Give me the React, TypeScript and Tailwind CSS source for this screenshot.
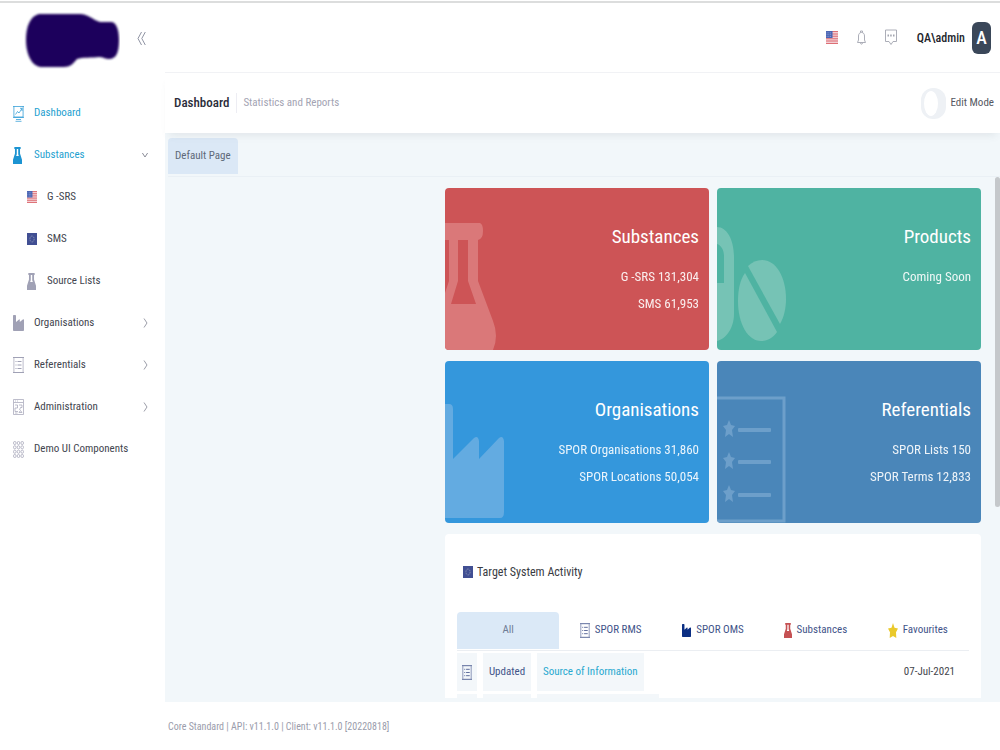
import type { ReactNode } from 'react'

type IconProps = { className?: string }

function FlaskIcon({ className }: IconProps) {
  return (
    <svg viewBox="0 0 10 18" preserveAspectRatio="none" className={className} aria-hidden="true">
      <path
        fillRule="evenodd"
        fill="currentColor"
        d="M1.500 0h7v2H7.800v5L10 13.500V18H0v-4.500L2.200 7V2h-.7zM4.200 2v5.600L3.500 9.500h3L5.800 7.600V2z"
      />
    </svg>
  )
}

function FactoryIcon({ className }: IconProps) {
  return (
    <svg viewBox="0 0 11 16" preserveAspectRatio="none" className={className} aria-hidden="true">
      <path
        fill="currentColor"
        d="M0 .8Q0 0 .8 0h1.400q.8 0 .8.800V7l3-2.600q.7-.4.8.400V7l3-2.600q1-.6 1.200.400V15q0 1-.8 1H.8Q0 16 0 15z"
      />
    </svg>
  )
}

function ListIcon({ className }: IconProps) {
  return (
    <svg viewBox="0 0 11 16" className={className} fill="none" stroke="currentColor" aria-hidden="true">
      <path d="M0 .5h11M0 15.500h11" />
      <path d="M.9 1v14M10.100 1v14" strokeWidth=".7" />
      <path d="M2.500 4.500h1m1 0h4M2.500 8h1m1 0h4M2.500 11.500h1m1 0h4" />
    </svg>
  )
}

function AdminIcon({ className }: IconProps) {
  return (
    <svg viewBox="0 0 11 16" className={className} fill="none" stroke="currentColor" strokeWidth=".7" aria-hidden="true">
      <path d="M.5.500h10v3H.5zM.5 3.500v12h10v-12M2 2h1m1 0h1M2 6h2.500v3H2v3.500h3M6 6h3v2.500H7.500L6.500 11M6 13.500l1.500-2 1.500 2zM2 14h2.500" />
    </svg>
  )
}

function GridIcon({ className }: IconProps) {
  return (
    <svg viewBox="0 0 11 17" className={className} fill="none" stroke="currentColor" strokeWidth=".7" aria-hidden="true">
      {[2, 6.3, 10.700, 15].map((y) =>
        [1.800, 5.500, 9.200].map((x) => <ellipse key={`${x}-${y}`} cx={x} cy={y} rx="1.300" ry="1.600" />),
      )}
    </svg>
  )
}

function BoardIcon({ className }: IconProps) {
  return (
    <svg viewBox="0 0 11 17" className={className} fill="none" stroke="currentColor" strokeWidth=".7" aria-hidden="true">
      <path d="M0 1.500h11M.900 1.500v10.500h9.200V1.500M0 12.500h11" />
      <path d="M2.500 9.500l2-3 1.500 1.500 3-4.500M7 3.300h2V6M3 14.500h5M2.500 16.300h6" />
    </svg>
  )
}

function UsFlag({ className }: IconProps) {
  return (
    <svg viewBox="0 0 11 12" preserveAspectRatio="none" className={className} aria-hidden="true">
      <path fill="#f3cfd4" d="M0 0h11v12H0z" />
      <path stroke="#dd6f75" strokeWidth="1" d="M0 .5h11M0 2.700h11M0 4.900h11M0 7.100h11M0 9.300h11M0 11.500h11" />
      <path fill="#4b66b5" d="M0 0h6v6.500H0z" />
      <path stroke="#a9b7e0" strokeWidth=".6" strokeDasharray=".8 .8" d="M.6 1.700h5M.6 3.400h5M.6 5.100h5" />
    </svg>
  )
}

function EuFlag({ className }: IconProps) {
  return (
    <svg viewBox="0 0 11 12" preserveAspectRatio="none" className={className} aria-hidden="true">
      <path fill="#414f93" d="M0 0h11v12H0z" />
      <ellipse cx="5.500" cy="6" rx="2.300" ry="3" fill="none" stroke="#a6aec0" strokeWidth=".8" strokeDasharray=".9 .7" />
    </svg>
  )
}

function ChevronRight({ className }: IconProps) {
  return (
    <svg viewBox="0 0 5 10" className={className} fill="none" stroke="currentColor" aria-hidden="true">
      <path d="M1 .5 4 5 1 9.500" />
    </svg>
  )
}

function ChevronDown({ className }: IconProps) {
  return (
    <svg viewBox="0 0 6 6" className={className} fill="none" stroke="currentColor" aria-hidden="true">
      <path d="M.4 1 3 5l2.600-4" />
    </svg>
  )
}

function StarIcon({ className }: IconProps) {
  return (
    <svg viewBox="0 0 10 15" preserveAspectRatio="none" className={className} aria-hidden="true">
      <path
        fill="currentColor"
        d="M5 0l1.500 4.700L10 5.400 8 9.200 8.300 15 5 13 1.700 15 2 9.200 0 5.400l3.500-.7z"
      />
    </svg>
  )
}

type NavItem = {
  label: string
  icon: ReactNode
  active?: boolean
  child?: boolean
  arrow?: 'right' | 'down'
}

const navItems: NavItem[] = [
  { label: 'Dashboard', icon: <BoardIcon className="h-[17px] w-[11px]" />, active: true },
  { label: 'Substances', icon: <FlaskIcon className="h-[17px] w-[9px]" />, active: true, arrow: 'down' },
  { label: 'G -SRS', icon: <UsFlag className="h-3 w-[10px]" />, child: true },
  { label: 'SMS', icon: <EuFlag className="h-3 w-[10px]" />, child: true },
  { label: 'Source Lists', icon: <FlaskIcon className="h-[17px] w-[9px]" />, child: true },
  { label: 'Organisations', icon: <FactoryIcon className="h-4 w-[11px]" />, arrow: 'right' },
  { label: 'Referentials', icon: <ListIcon className="h-4 w-[11px]" />, arrow: 'right' },
  { label: 'Administration', icon: <AdminIcon className="h-4 w-[11px]" />, arrow: 'right' },
  { label: 'Demo UI Components', icon: <GridIcon className="h-[17px] w-[11px]" /> },
]

function Sidebar() {
  return (
    <aside className="w-[165px] shrink-0 bg-white">
      <div className="flex h-[89px] items-start justify-between pt-2 pr-[19px] pl-6">
        <svg viewBox="0 0 96 58" className="h-[58px] w-24" role="img" aria-label="Logo">
          <defs>
            <filter id="soft">
              <feGaussianBlur stdDeviation="1" />
            </filter>
          </defs>
          <path
            filter="url(#soft)"
            fill="#1f005c"
            d="M15 3h41c8 0 13 6 20 8h11c5 0 8 7 8 18 0 13-3 19-10 19-4 0-6-2-10-2-7 1-17 0-22 2-4 5-7 8-13 8H17C7 55 2 42 2 29S6 5 15 3z"
          />
        </svg>
        <button type="button" aria-label="Collapse menu" className="mt-5 text-[#8f93a3]">
          <svg viewBox="0 0 9 15" className="h-[15px] w-[9px]" fill="none" stroke="currentColor">
            <path d="M4.500 1 1 7.500l3.500 6.500M8.300 1 4.800 7.500 8.300 14" />
          </svg>
        </button>
      </div>

      <nav>
        {navItems.map((item) => (
          <a
            key={item.label}
            href="#"
            className={`flex h-[42px] items-center pr-[17px] text-[11px] ${item.child ? 'pl-[27px]' : 'pl-[13px]'} ${
              item.active ? 'text-[#1f9fd0]' : 'text-[#43464f]'
            }`}
          >
            <span
              className={`flex shrink-0 ${item.child ? 'w-5' : 'w-[21px]'} ${
                item.active ? 'text-[#1c94d2]' : 'text-[#a0a1b5]'
              }`}
            >
              {item.icon}
            </span>
            <span className="flex-1 whitespace-nowrap">{item.label}</span>
            {item.arrow === 'right' && <ChevronRight className="h-[10px] w-[5px] text-[#9b9da8]" />}
            {item.arrow === 'down' && <ChevronDown className="h-[6px] w-[6px] text-[#8b8d98]" />}
          </a>
        ))}
      </nav>
    </aside>
  )
}

function Topbar() {
  return (
    <header className="flex h-[70px] shrink-0 items-center justify-end border-b border-[#f1f2f5] bg-white pr-[9px]">
      <UsFlag className="mr-[19px] h-[13px] w-3" />
      <button type="button" aria-label="Notifications" className="mr-[19px] text-[#a3a5b0]">
        <svg viewBox="0 0 9 15" className="h-[15px] w-[9px]" fill="none" stroke="currentColor" strokeWidth=".9">
          <path d="M3.500 2.500V1h2v1.500M1.500 10V6c0-2 1-3.500 3-3.500s3 1.500 3 3.500v4l1 2.500H.500zM3.500 13c0 1.500 2 1.500 2 0" />
        </svg>
      </button>
      <button type="button" aria-label="Messages" className="mr-5 text-[#a3a5b0]">
        <svg viewBox="0 0 12 17" className="h-[17px] w-3" fill="none" stroke="currentColor" strokeWidth=".9">
          <path d="M.5 1h11v11.500H8L6 15.500 4 12.500H.500z" />
          <path d="M2.500 6.500h1.500M5.200 6.500h1.500M8 6.500h1.500" strokeWidth="2" />
        </svg>
      </button>
      <span className="mr-[7px] text-[12px] font-medium text-[#23252c]">QA\admin</span>
      <span className="flex h-8 w-[19px] items-center justify-center rounded-md bg-[#3a4759] text-[18px] font-medium text-white">
        A
      </span>
    </header>
  )
}

function Subheader() {
  return (
    <div className="z-10 flex h-[60px] shrink-0 items-center bg-white pr-[6px] pl-[9px] shadow-[0_6px_8px_-4px_rgba(90,95,105,0.12)]">
      <h1 className="border-r border-[#ededf3] pr-[7px] text-[13px] font-medium text-[#2b2d3a]">Dashboard</h1>
      <span className="pl-[6px] text-[11px] text-[#a3a4b3]">Statistics and Reports</span>
      <label className="ml-auto flex items-center gap-1 text-[11px] text-[#555861]">
        <input
          type="checkbox"
          className="h-[31px] w-[25px] appearance-none rounded-xl bg-[#eef1f5] p-[3px] before:block before:h-[25px] before:w-[14px] before:rounded-[50%] before:bg-white checked:before:ml-auto"
        />
        Edit Mode
      </label>
    </div>
  )
}

type StatCardProps = {
  title: string
  lines: string[]
  className: string
  children: ReactNode
}

function StatCard({ title, lines, className, children }: StatCardProps) {
  return (
    <section className={`relative h-[162px] overflow-hidden rounded pt-8 pr-[10px] text-right text-white ${className}`}>
      {children}
      <h2 className="mb-[9px] text-[19px] leading-[34px]">{title}</h2>
      {lines.map((line) => (
        <p key={line} className="text-[13px] leading-[27px] opacity-90">
          {line}
        </p>
      ))}
    </section>
  )
}

function StatCards() {
  return (
    <>
      <StatCard title="Substances" lines={['G -SRS 131,304', 'SMS 61,953']} className="col-start-2 bg-[#cd5456]">
        <svg viewBox="0 0 52 127" className="absolute bottom-0 left-0 h-[127px] w-[52px] text-[#da7879]">
          <path
            fill="currentColor"
            fillRule="evenodd"
            d="M0 0h35q3 1 3 8 0 8-5 9v41l15 40q6 15 0 29H0V70l4-12V17H0zM13 17v41L6 81h25L23 58V17z"
          />
        </svg>
      </StatCard>

      <StatCard title="Products" lines={['Coming Soon']} className="bg-[#4fb3a2]">
        <svg viewBox="0 0 70 120" className="absolute bottom-[5px] left-0 h-[120px] w-[70px]" fill="#76c3b5">
          <path fillRule="evenodd" d="M0 2c10 0 17 13 17 30v57c0 14-8 25-17 27zM0 19v39h7V31C7 25 4 20 0 19z" />
          <path d="M31 41c4-4 9-6 14-6 14 0 24 17 24 39 0 9-2 18-6 25z" />
          <path d="M28 48l32 59c-4 6-10 9-16 9-13 0-23-17-23-40 0-11 2-21 7-28z" />
        </svg>
      </StatCard>

      <StatCard
        title="Organisations"
        lines={['SPOR Organisations 31,860', 'SPOR Locations 50,054']}
        className="col-start-2 bg-[#3497dc]"
      >
        <svg viewBox="0 0 60 114" className="absolute bottom-[5px] left-0 h-[114px] w-[60px]">
          <path
            fill="#63abe1"
            d="M0 0h4q4 0 4 5v50l21-21q4-3 5 3v18l20-21q4-3 5 3v71q0 6-4 6H0z"
          />
        </svg>
      </StatCard>

      <StatCard title="Referentials" lines={['SPOR Lists 150', 'SPOR Terms 12,833']} className="bg-[#4a86b9]">
        <svg viewBox="0 0 70 127" className="absolute bottom-0 left-0 h-[127px] w-[70px] text-[#6d9fca]">
          <path d="M0 2h67v123H0" fill="none" stroke="currentColor" strokeWidth="3" />
          {[25, 57, 90].map((y) => (
            <g key={y} transform={`translate(0 ${y})`} fill="currentColor">
              <path d="M12-1l2 5 4 1-3 4 1 7-4-3-4 3 1-7-3-4 4-1z" />
              <rect x="21" y="7" width="33" height="4" rx="1" />
            </g>
          ))}
        </svg>
      </StatCard>
    </>
  )
}

const activityTabs = [
  { label: 'SPOR RMS', icon: <ListIcon className="h-[15px] w-[10px] text-[#4f5f93]" /> },
  { label: 'SPOR OMS', icon: <FactoryIcon className="h-[13px] w-[9px] text-[#0b2f83]" /> },
  { label: 'Substances', icon: <FlaskIcon className="h-[15px] w-2 text-[#c55153]" /> },
  { label: 'Favourites', icon: <StarIcon className="h-[15px] w-[10px] text-[#eac92b]" /> },
]

function ActivityPanel() {
  return (
    <section className="col-span-2 col-start-2 rounded bg-white px-3 pt-[22px]">
      <h3 className="flex h-8 items-center gap-1 pl-[6px] text-[12px] text-[#393b43]">
        <EuFlag className="h-3 w-[10px]" />
        Target System Activity
      </h3>

      <div className="mt-6 grid grid-cols-5 border-b border-[#ebeef2] pb-px text-[11px] text-[#3f5489]">
        <button type="button" className="h-[37px] rounded-t bg-[#dbe9f7] text-[#6f7c95]">
          All
        </button>
        {activityTabs.map((tab) => (
          <button key={tab.label} type="button" className="flex h-[37px] items-center justify-center gap-[5px]">
            {tab.icon}
            {tab.label}
          </button>
        ))}
      </div>

      <table className="mt-[2px] w-full text-[11px]">
        <tbody>
          <tr>
            <td className="w-[26px] p-0">
              <div className="flex h-[38px] w-5 items-center justify-center bg-[#f3f7fa]">
                <ListIcon className="h-[15px] w-[10px] text-[#4f5f93]" />
              </div>
            </td>
            <td className="w-[54px] p-0">
              <div className="flex h-[38px] w-12 items-center justify-center bg-[#f3f7fa] text-[#3f5489]">Updated</div>
            </td>
            <td className="p-0">
              <a href="#" className="inline-flex h-[38px] items-center bg-[#f3f7fa] px-[6px] align-top text-[#27a9d0]">
                Source of Information
              </a>
            </td>
            <td className="p-0 pr-[14px] text-right text-[#43454c]">07-Jul-2021</td>
          </tr>
          <tr>
            <td className="p-0 pt-[3px]">
              <div className="h-[38px] w-5 bg-[#f3f7fa]" />
            </td>
            <td className="p-0 pt-[3px]">
              <div className="h-[38px] w-12 bg-[#f3f7fa]" />
            </td>
            <td className="p-0 pt-[3px]">
              <div className="h-[38px] w-[122px] bg-[#f3f7fa]" />
            </td>
            <td />
          </tr>
        </tbody>
      </table>
    </section>
  )
}

export default function App() {
  return (
    <div className="flex h-screen flex-col bg-white font-['Roboto_Condensed',Roboto,sans-serif]">
      <div className="h-[3px] shrink-0 border-b-2 border-[#dcdddd]" />
      <div className="flex min-h-0 flex-1">
        <Sidebar />

        <div className="flex min-w-0 flex-1 flex-col">
          <Topbar />
          <Subheader />

          <main className="flex min-h-0 flex-1 flex-col bg-[#f2f7fa] pt-[5px] pb-1">
            <div className="ml-[3px] h-[39px] shrink-0 border-b border-[#eaf0f5]">
              <button type="button" className="h-9 rounded-t bg-[#dbe8f6] px-[7px] text-[11px] text-[#5e6878]">
                Default Page
              </button>
            </div>

            <div className="relative min-h-0 flex-1 overflow-hidden">
              <div className="grid grid-cols-3 gap-x-2 gap-y-[11px] pt-[11px] pr-[19px] pl-2">
                <StatCards />
                <ActivityPanel />
              </div>
              <div className="absolute top-0 right-0 h-[330px] w-[5px] rounded-full bg-[#c5c8cb]" />
            </div>
          </main>

          <footer className="flex h-12 shrink-0 items-center bg-white px-[3px] text-[10px] text-[#9a9cab]">
            Core Standard | API: v11.1.0 | Client: v11.1.0 [20220818]
          </footer>
        </div>
      </div>
    </div>
  )
}
